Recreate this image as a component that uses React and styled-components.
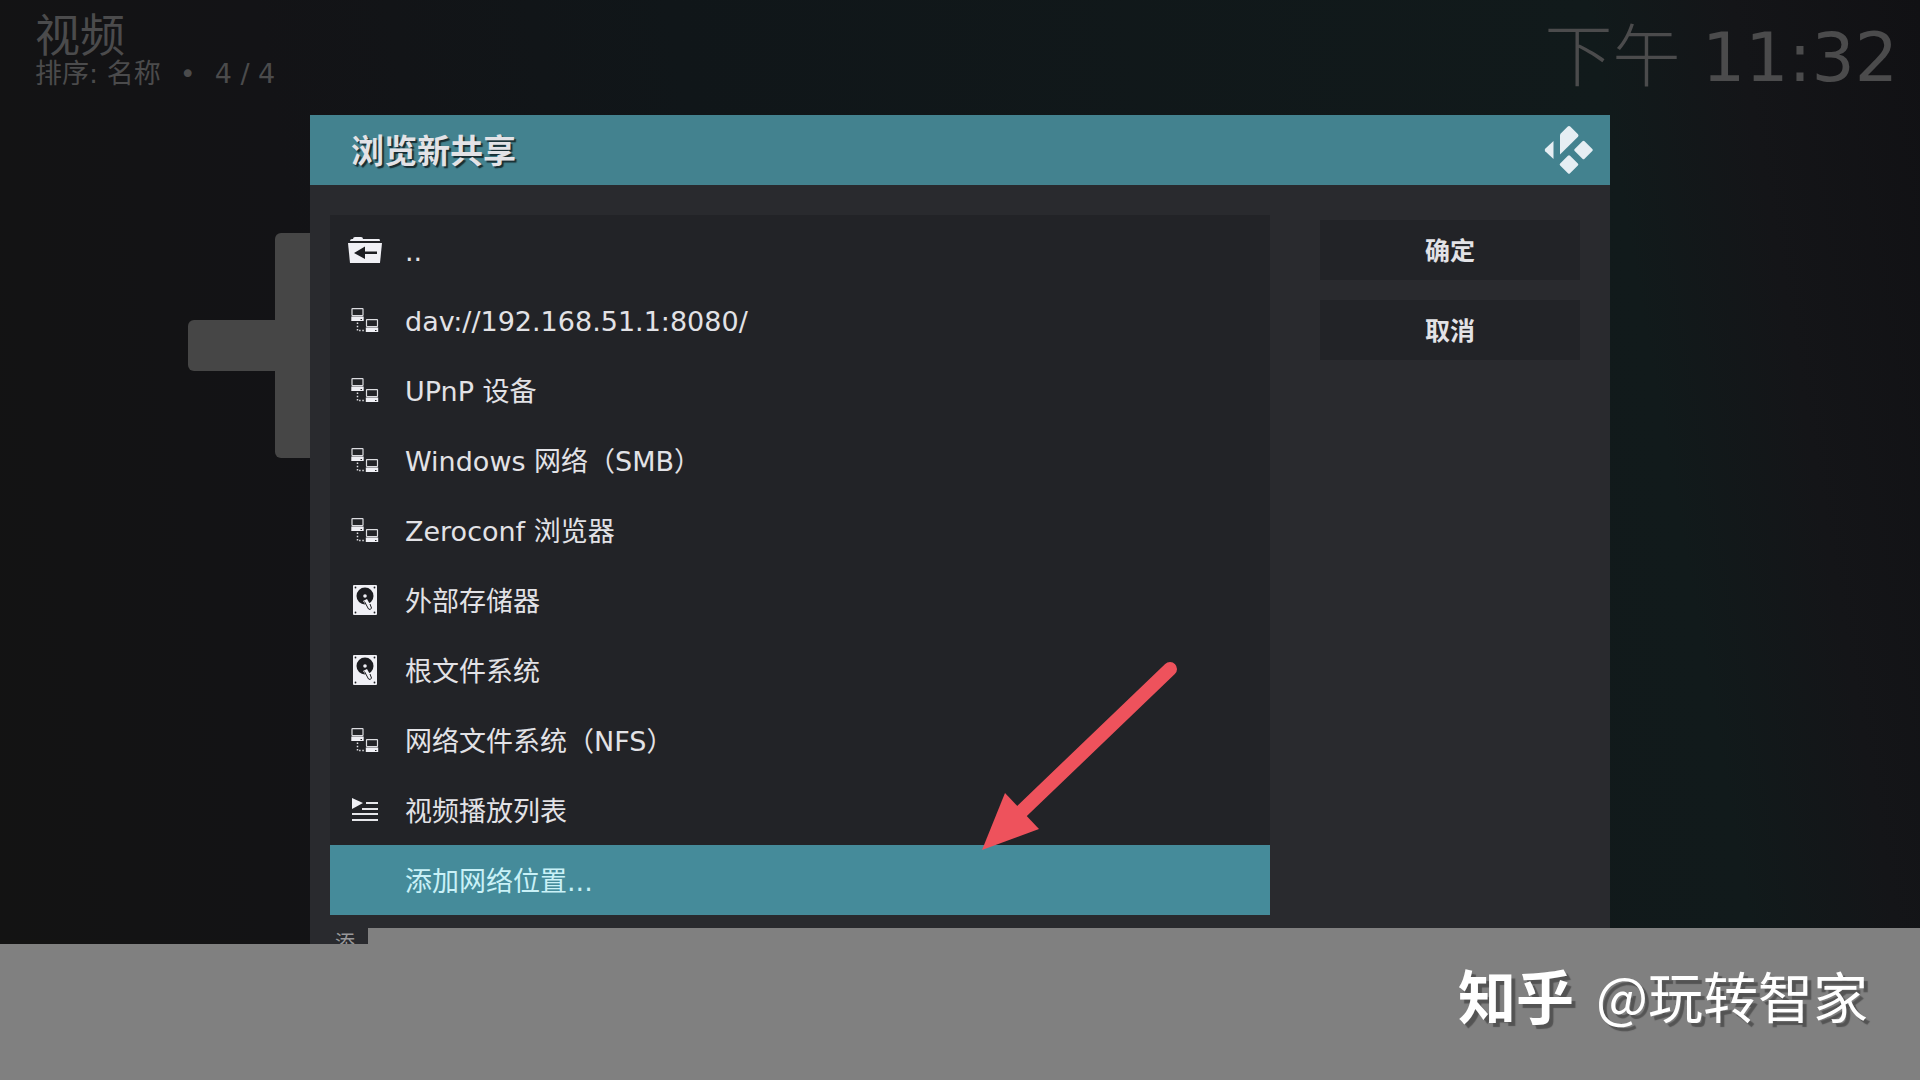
import styled, { createGlobalStyle, css } from 'styled-components'

const GlobalStyle = createGlobalStyle`
  * {
    box-sizing: border-box;
  }

  body {
    margin: 0;
    background: #808080;
    font-family: 'DejaVu Sans', 'Noto Sans CJK SC', sans-serif;
  }
`

const Page = styled.div`
  min-height: 100vh;
  display: flex;
  flex-direction: column;
`

const Stage = styled.main`
  position: relative;
  flex: 1;
  overflow: hidden;
  display: grid;
  grid-template-columns: minmax(0, 1fr);
  background: linear-gradient(80deg, #131313 0%, #131316 20%, #101619 40%, #111a1b 84%, #141518 91%, #111114 100%);

  > * {
    grid-area: 1 / 1;
  }
`

const TopBar = styled.header`
  display: flex;
  justify-content: space-between;
  align-items: flex-start;
  padding: 14px 22px 0 35px;
  color: #4b4b4c;
`

const Heading = styled.div`
  h1 {
    margin: 0;
    font-size: 45px;
    line-height: 46px;
    font-weight: 400;
  }

  p {
    margin: 0;
    display: flex;
    gap: 19px;
    font-size: 27px;
    line-height: 27px;
  }
`

const Clock = styled.time`
  font-size: 68px;
  line-height: 88px;

  span {
    font-weight: 300;
  }
`

const AddTile = styled.svg`
  width: 225px;
  height: 225px;
  margin: 233px 0 0 188px;
  fill: #464646;
`

const Dialog = styled.section`
  width: 1300px;
  max-width: 100%;
  margin: 115px auto 0;
  background: #292a2e;
  color: #e2e2e6;
  z-index: 1;
`

const DialogHeader = styled.div`
  height: 70px;
  padding: 0 16px 0 41px;
  display: flex;
  justify-content: space-between;
  align-items: center;
  background: #43828f;

  h2 {
    margin: 0;
    padding-top: 3px;
    font-size: 33px;
    line-height: 40px;
    font-weight: 700;
    text-shadow: 2px 2px 1px rgba(0, 0, 0, 0.65);
  }

  svg {
    width: 50px;
    height: 50px;
    fill: #e6eef3;
  }
`

const DialogBody = styled.div`
  display: flex;
  gap: 50px;
  padding: 30px 30px 0 20px;
`

const List = styled.ul`
  flex: 1;
  min-width: 0;
  margin: 0;
  padding: 0;
  list-style: none;
  background: #222327;
`

const Row = styled.button`
  width: 100%;
  height: 70px;
  padding: 0;
  border: 0;
  display: grid;
  grid-template-columns: 70px 1fr;
  column-gap: 5px;
  align-items: center;
  background: transparent;
  color: inherit;
  font-family: inherit;
  font-size: 27px;
  line-height: 40px;
  text-align: left;
  cursor: pointer;

  svg {
    justify-self: center;
  }

  span {
    padding-top: 3px;
  }

  ${({ $selected }) =>
    $selected &&
    css`
      background: #458b9a;
      color: #c9f1f7;
    `}
`

const Actions = styled.div`
  width: 260px;
  padding-top: 5px;
  display: flex;
  flex-direction: column;
  gap: 20px;
`

const Action = styled.button`
  height: 60px;
  padding: 3px 0 0;
  border: 0;
  background: #222327;
  color: inherit;
  font-family: inherit;
  font-size: 25px;
  line-height: 36px;
  font-weight: 700;
  cursor: pointer;
`

const Status = styled.div`
  height: 29px;
  padding: 14px 0 0 25px;
  overflow: hidden;
  color: #98989a;
  font-size: 20px;
  line-height: 28px;
`

const Strip = styled.div`
  position: absolute;
  left: calc(50% - 592px);
  right: 0;
  bottom: 0;
  height: 16px;
  background: #808080;
  z-index: 2;
`

const Pointer = styled.svg`
  position: absolute;
  top: 655px;
  left: calc(50% + 20px);
  width: 204px;
  height: 200px;
  z-index: 3;
`

const Footer = styled.footer`
  height: 136px;
  padding: 6px 52px 0 0;
  display: flex;
  justify-content: flex-end;
  align-items: flex-start;
  gap: 22px;
  background: #808080;
  color: #fff;
  font-family: 'Noto Sans CJK SC', sans-serif;
  font-size: 55px;
  line-height: 88px;
  text-shadow: 4px 4px 1px rgba(0, 0, 0, 0.35);

  strong {
    font-size: 58px;
    font-weight: 700;
  }
`

const FolderUpIcon = () => (
  <svg width="34" height="26" viewBox="0 0 34 26">
    <path d="M5 2 Q5 0 7 0 H13 Q15 0 15 2 H31 Q32 2 32 4 H2 Q2 2 4 2 Z" fill="#f0f0f5" />
    <path d="M0 6 H34 L32 26 H2 Z" fill="#f0f0f5" />
    <path d="M6 16 L17 9.500 V14.500 H29 V17 H17 V22 Z" fill="#1c1d21" />
  </svg>
)

const NetworkIcon = () => (
  <svg width="28" height="24" viewBox="0 0 28 24">
    <g fill="none" stroke="#dcdce0" strokeWidth="1.200">
      <rect x="1" y="0.600" width="11" height="7" rx="0.500" />
      <rect x="15.500" y="11.600" width="11" height="7" rx="0.500" />
    </g>
    <path d="M0.300 8.600 H12.700 V13 H0.300 Z M14.800 19.600 H27.200 V24 H14.800 Z" fill="#f0f0f5" />
    <path d="M9.500 11.500 h1.500 M24 22.500 h1.500" stroke="#222327" />
    <path d="M6.500 14.500 V22.500 H14.500" fill="none" stroke="#dcdce0" strokeWidth="1.500" strokeDasharray="1.500 1.700" />
  </svg>
)

const DiskIcon = () => (
  <svg width="24" height="30" viewBox="0 0 24 30">
    <rect width="24" height="30" rx="1" fill="#f0f0f5" />
    <circle cx="12" cy="11" r="8.500" fill="#1c1d21" />
    <circle cx="12" cy="11" r="1.800" fill="#f0f0f5" />
    <path d="M10 16 L16 25 L19 23 L14 14 Z" fill="#f0f0f5" />
    <path d="M11.500 16.500 L15.500 24 Q17.500 25.500 18.500 23 L17 19" fill="none" stroke="#1c1d21" />
    <g fill="#1c1d21">
      <circle cx="2.500" cy="2.500" r="0.900" />
      <circle cx="21.500" cy="2.500" r="0.900" />
      <circle cx="2.500" cy="27.500" r="0.900" />
      <circle cx="21.500" cy="27.500" r="0.900" />
    </g>
  </svg>
)

const PlaylistIcon = () => (
  <svg width="26" height="24" viewBox="0 0 26 24">
    <path d="M0 0 L11 5 L0 11 Z" fill="#f0f0f5" />
    <path d="M14 5 H26 M10 11 H26 M0 16 H26 M0 22 H26" stroke="#e6e6ea" strokeWidth="1.800" />
  </svg>
)

const KodiLogo = () => (
  <svg viewBox="0 0 50 50">
    <path d="M23.500 1.700 Q25 0.300 26.500 1.700 L34 9.200 Q35 10.500 34 11.800 L16 29.500 V10.500 Q16 9.200 17 8.200 Z" />
    <path d="M9.500 16 V34 L1.200 26.300 Q0.200 25 1.200 23.700 Z" />
    <rect x="18" y="18" width="14" height="14" rx="1.500" transform="translate(14.500 0) rotate(45 25 25)" />
    <rect x="18" y="18" width="14" height="14" rx="1.500" transform="translate(0 14.500) rotate(45 25 25)" />
  </svg>
)

const items = [
  { label: '..', icon: FolderUpIcon },
  { label: 'dav://192.168.51.1:8080/', icon: NetworkIcon },
  { label: 'UPnP 设备', icon: NetworkIcon },
  { label: 'Windows 网络（SMB）', icon: NetworkIcon },
  { label: 'Zeroconf 浏览器', icon: NetworkIcon },
  { label: '外部存储器', icon: DiskIcon },
  { label: '根文件系统', icon: DiskIcon },
  { label: '网络文件系统（NFS）', icon: NetworkIcon },
  { label: '视频播放列表', icon: PlaylistIcon },
  { label: '添加网络位置...', selected: true },
]

export default function App() {
  return (
    <>
      <GlobalStyle />
      <Page lang="zh-CN">
        <Stage>
          <TopBar>
            <Heading>
              <h1>视频</h1>
              <p>
                <span>排序: 名称</span>
                <span>•</span>
                <span>4 / 4</span>
              </p>
            </Heading>
            <Clock>
              <span>下午</span> 11:32
            </Clock>
          </TopBar>
          <AddTile viewBox="0 0 225 225">
            <rect x="87" width="51" height="225" rx="6" />
            <rect y="87" width="225" height="51" rx="6" />
          </AddTile>
          <Dialog role="dialog" aria-labelledby="dialog-title">
            <DialogHeader>
              <h2 id="dialog-title">浏览新共享</h2>
              <KodiLogo />
            </DialogHeader>
            <DialogBody>
              <List>
                {items.map(({ label, icon: Icon, selected }) => (
                  <li key={label}>
                    <Row type="button" $selected={selected}>
                      {Icon ? <Icon /> : <i />}
                      <span>{label}</span>
                    </Row>
                  </li>
                ))}
              </List>
              <Actions>
                <Action type="button">确定</Action>
                <Action type="button">取消</Action>
              </Actions>
            </DialogBody>
            <Status>添</Status>
          </Dialog>
          <Strip />
          <Pointer viewBox="0 0 204 200">
            <path d="M190 14 L42 156" stroke="#ee525c" strokeWidth="14" strokeLinecap="round" />
            <path d="M2 195 L25 138 L59 174 Z" fill="#ee525c" />
          </Pointer>
        </Stage>
        <Footer>
          <strong>知乎</strong>
          <span>@玩转智家</span>
        </Footer>
      </Page>
    </>
  )
}
